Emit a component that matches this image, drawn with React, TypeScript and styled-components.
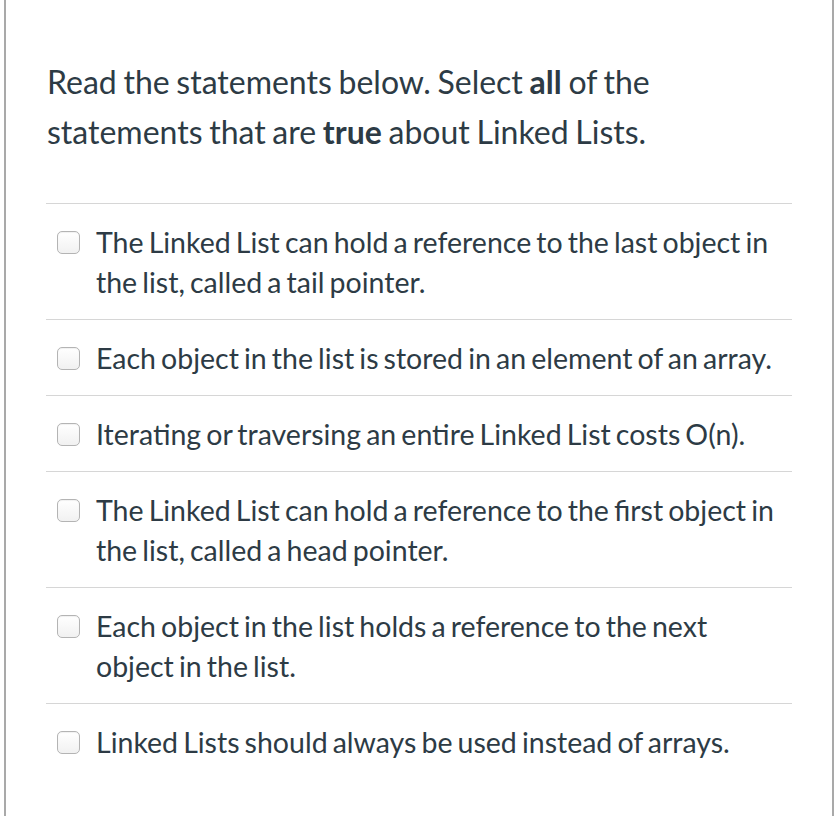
import styled, { createGlobalStyle } from "styled-components"

const GlobalStyle = createGlobalStyle`
  html, body {
    margin: 0;
    padding: 0;
    background: #fff;
  }
  body {
    font-family: Lato, "Open Sans", sans-serif;
    color: #2d3b45;
  }
`

const Frame = styled.div`
  box-sizing: border-box;
  margin: 0 2px 0 4px;
  min-height: 816px;
  border-left: 2px solid #a9a9a9;
  border-right: 2px solid #a9a9a9;
  padding: 57px 40px 0;
`

const Question = styled.p`
  margin: 0 0 46px;
  padding-left: 1px;
  font-size: 32px;
  line-height: 50px;
  word-spacing: -1.5px;

  strong {
    font-weight: 700;
  }
`

const AnswerList = styled.div`
  display: flex;
  flex-direction: column;
`

const AnswerRow = styled.label`
  display: flex;
  align-items: flex-start;
  gap: 17px;
  padding: 18px 0 17px 11px;
  border-top: 1px solid #d6d6d6;
  font-size: 28.5px;
  line-height: 40px;
  word-spacing: -2.2px;
  cursor: pointer;
`

const Box = styled.span`
  flex: none;
  box-sizing: border-box;
  width: 23px;
  height: 23px;
  margin-top: 9px;
  border: 1.5px solid #b4b4b4;
  border-radius: 5px;
  background: linear-gradient(#ffffff, #f1f1f1);
  box-shadow: inset 0 1px 1px rgba(0, 0, 0, 0.06);
`

const AnswerText = styled.span`
  flex: 1;
  margin-left: -1px;
  padding-right: 15px;
`

const answers = [
  "The Linked List can hold a reference to the last object in the list, called a tail pointer.",
  "Each object in the list is stored in an element of an array.",
  "Iterating or traversing an entire Linked List costs O(n).",
  "The Linked List can hold a reference to the first object in the list, called a head pointer.",
  "Each object in the list holds a reference to the next object in the list.",
  "Linked Lists should always be used instead of arrays.",
]

export default function App() {
  return (
    <>
      <GlobalStyle />
      <Frame>
        <Question>
          Read the statements below. Select <strong>all</strong> of the
          statements that are <strong>true</strong> about Linked Lists.
        </Question>
        <AnswerList>
          {answers.map((text) => (
            <AnswerRow key={text}>
              <Box />
              <AnswerText>{text}</AnswerText>
            </AnswerRow>
          ))}
        </AnswerList>
      </Frame>
    </>
  )
}
